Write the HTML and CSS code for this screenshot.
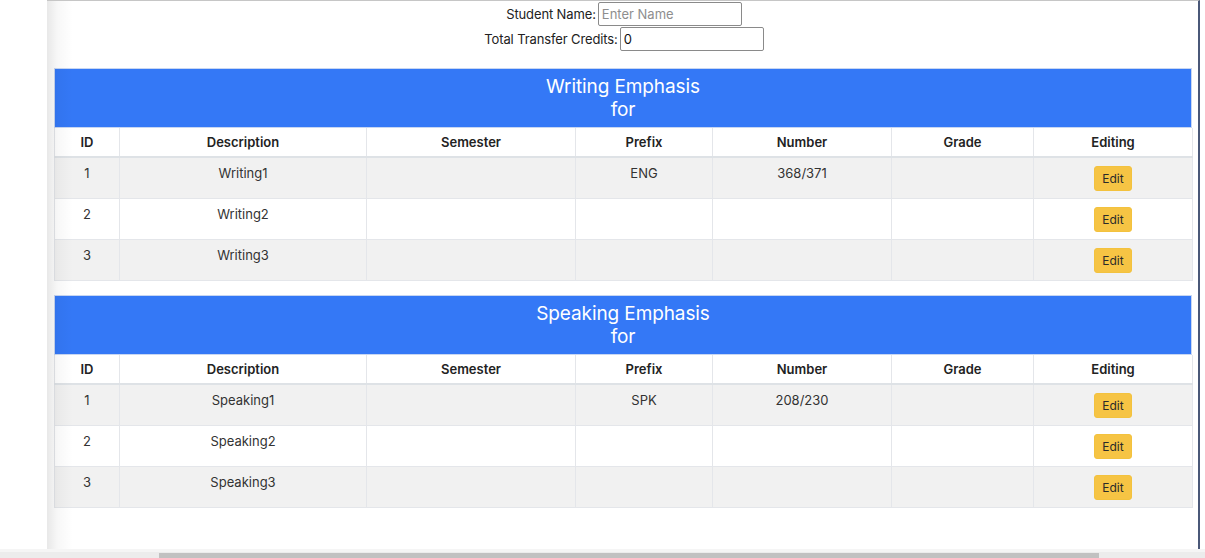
FILE: index.html
```html
<!DOCTYPE html>
<html lang="en">
<head>
<meta charset="utf-8">
<title>Emphasis</title>
<link rel="stylesheet" href="styles.css">
</head>
<body>
<div class="screen">
  <div class="window-row">
    <div class="desk-gap"></div>
    <div class="window">
      <div class="content">
        <form class="student-form">
          <div class="form-row">
            <label for="sname">Student Name:</label>
            <input id="sname" type="text" placeholder="Enter Name">
          </div>
          <div class="form-row">
            <label for="credits">Total Transfer Credits:</label>
            <input id="credits" type="text" value="0">
          </div>
        </form>

        <section class="block">
          <div class="block-title">Writing Emphasis<br>for</div>
          <table class="grid">
            <colgroup>
              <col class="c-id"><col class="c-desc"><col class="c-sem"><col class="c-pre"><col class="c-num"><col class="c-grade"><col class="c-edit">
            </colgroup>
            <thead>
              <tr><th>ID</th><th>Description</th><th>Semester</th><th>Prefix</th><th>Number</th><th>Grade</th><th>Editing</th></tr>
            </thead>
            <tbody>
              <tr><td>1</td><td>Writing1</td><td></td><td>ENG</td><td>368/371</td><td></td><td><button class="btn-edit">Edit</button></td></tr>
              <tr><td>2</td><td>Writing2</td><td></td><td></td><td></td><td></td><td><button class="btn-edit">Edit</button></td></tr>
              <tr><td>3</td><td>Writing3</td><td></td><td></td><td></td><td></td><td><button class="btn-edit">Edit</button></td></tr>
            </tbody>
          </table>
        </section>

        <section class="block">
          <div class="block-title">Speaking Emphasis<br>for</div>
          <table class="grid">
            <colgroup>
              <col class="c-id"><col class="c-desc"><col class="c-sem"><col class="c-pre"><col class="c-num"><col class="c-grade"><col class="c-edit">
            </colgroup>
            <thead>
              <tr><th>ID</th><th>Description</th><th>Semester</th><th>Prefix</th><th>Number</th><th>Grade</th><th>Editing</th></tr>
            </thead>
            <tbody>
              <tr><td>1</td><td>Speaking1</td><td></td><td>SPK</td><td>208/230</td><td></td><td><button class="btn-edit">Edit</button></td></tr>
              <tr><td>2</td><td>Speaking2</td><td></td><td></td><td></td><td></td><td><button class="btn-edit">Edit</button></td></tr>
              <tr><td>3</td><td>Speaking3</td><td></td><td></td><td></td><td></td><td><button class="btn-edit">Edit</button></td></tr>
            </tbody>
          </table>
        </section>
      </div>
    </div>
  </div>
  <div class="hscroll">
    <div class="track"><div class="thumb"></div></div>
  </div>
</div>
</body>
</html>
```

FILE: styles.css
```css
* { box-sizing: border-box; }

html, body {
  margin: 0;
  padding: 0;
  background: #ffffff;
}

body {
  font-family: "Inter", "Liberation Sans", sans-serif;
  color: #212529;
  font-size: 13px;
  overflow: hidden;
}

.screen {
  width: 1205px;
  height: 558px;
  display: flex;
  flex-direction: column;
}

.window-row {
  display: flex;
  height: 549px;
}

.desk-gap {
  width: 47px;
  flex: none;
}

.window {
  position: relative;
  width: 1153px;
  flex: none;
  border-style: solid;
  border-width: 1px 2px 0 0;
  border-color: #c6c6c6 #4a5878 transparent transparent;
  background: #ffffff;
  overflow: hidden;
}

.window::after {
  content: "";
  position: absolute;
  left: 0;
  top: 0;
  bottom: 0;
  width: 26px;
  background: linear-gradient(to right, rgba(0,0,0,0.09), rgba(0,0,0,0.03) 40%, rgba(0,0,0,0));
  pointer-events: none;
}

.content {
  padding: 0 6px 0 7px;
}

/* form */
.student-form {
  display: flex;
  flex-direction: column;
  align-items: center;
  margin: 0;
}

.form-row {
  display: flex;
  align-items: center;
  justify-content: center;
  height: 25px;
  gap: 2px;
  padding-left: 2px;
}

.form-row label {
  font-size: 13px;
  color: #222;
  letter-spacing: -0.12px;
}

.form-row input {
  width: 144px;
  height: 24px;
  border: 1px solid #8a8a8a;
  border-radius: 2px;
  padding: 0 3px;
  font-family: inherit;
  font-size: 13px;
  color: #111;
  background: #fff;
  outline: none;
}

.form-row input::placeholder {
  color: #8e8e8e;
}

/* blocks */
.block {
  margin-top: 17px;
}

.block + .block {
  margin-top: 14px;
}

.block-title {
  background: #3478f6;
  border: 1px solid #c7d6f2;
  color: #ffffff;
  font-size: 19px;
  line-height: 23px;
  text-align: center;
  padding: 6px 0 6px;
  height: 60px;
  letter-spacing: -0.1px;
}

.grid {
  width: 100%;
  border-collapse: collapse;
  table-layout: fixed;
}

.c-id { width: 65px; }
.c-desc { width: 247px; }
.c-sem { width: 209px; }
.c-pre { width: 137px; }
.c-num { width: 179px; }
.c-grade { width: 142px; }
.c-edit { width: 159px; }

.grid th,
.grid td {
  border: 1px solid #e4e6ea;
  text-align: center;
  font-size: 13px;
}

.grid th {
  font-weight: 600;
  color: #222;
  line-height: 18px;
  padding: 5px 8px 5px;
  border-top: 0;
  border-bottom: 2px solid #dee2e6;
  background: #fff;
}

.grid td {
  vertical-align: top;
  line-height: 18px;
  padding: 6px 8px 7px;
  color: #333;
}

.grid tbody tr:nth-child(odd) td {
  background: #f1f1f1;
}

.btn-edit {
  display: inline-block;
  margin-top: 2px;
  height: 25px;
  padding: 0 7px;
  border: 1px solid #f3c23e;
  border-radius: 3px;
  background: #f6c444;
  color: #2a2a2a;
  font-family: inherit;
  font-size: 12px;
  line-height: 23px;
}

/* bottom scrollbar */
.hscroll {
  height: 9px;
  background: #f5f5f5;
  padding-top: 3px;
}

.track {
  height: 6px;
  background: #ececec;
  padding-top: 1px;
}

.thumb {
  margin-left: 159px;
  width: 940px;
  height: 5px;
  background: #c1c1c1;
}
```
